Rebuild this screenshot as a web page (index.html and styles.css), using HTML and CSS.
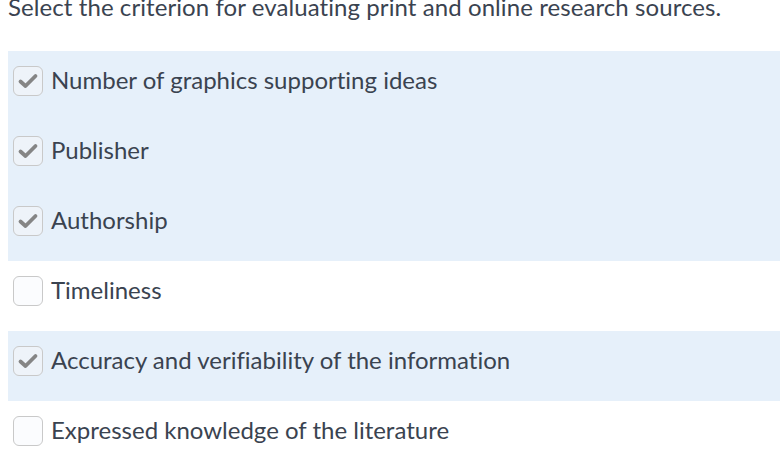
FILE: index.html
```html
<!DOCTYPE html>
<html>
<head>
<meta charset="utf-8">
<link rel="stylesheet" href="styles.css">
</head>
<body>
<div class="page">
  <p class="question">Select the criterion for evaluating print and online research sources.</p>
  <ul class="options">
    <li class="option selected"><span class="box"><svg viewBox="0 0 30 30" width="30" height="30"><path d="M7.5 15.5 L12.5 20 L22.5 10" fill="none" stroke="#858585" stroke-width="3.8" stroke-linecap="round" stroke-linejoin="round"/></svg></span><span class="label">Number of graphics supporting ideas</span></li>
    <li class="option selected"><span class="box"><svg viewBox="0 0 30 30" width="30" height="30"><path d="M7.5 15.5 L12.5 20 L22.5 10" fill="none" stroke="#858585" stroke-width="3.8" stroke-linecap="round" stroke-linejoin="round"/></svg></span><span class="label">Publisher</span></li>
    <li class="option selected"><span class="box"><svg viewBox="0 0 30 30" width="30" height="30"><path d="M7.5 15.5 L12.5 20 L22.5 10" fill="none" stroke="#858585" stroke-width="3.8" stroke-linecap="round" stroke-linejoin="round"/></svg></span><span class="label">Authorship</span></li>
    <li class="option"><span class="box"></span><span class="label">Timeliness</span></li>
    <li class="option selected"><span class="box"><svg viewBox="0 0 30 30" width="30" height="30"><path d="M7.5 15.5 L12.5 20 L22.5 10" fill="none" stroke="#858585" stroke-width="3.8" stroke-linecap="round" stroke-linejoin="round"/></svg></span><span class="label">Accuracy and verifiability of the information</span></li>
    <li class="option"><span class="box"></span><span class="label">Expressed knowledge of the literature</span></li>
  </ul>
</div>
</body>
</html>
```
FILE: styles.css
```css
html, body {
  margin: 0;
  padding: 0;
  background: #ffffff;
  overflow: hidden;
}
.page {
  padding-left: 8px;
  font-family: Lato, "Noto Sans", sans-serif;
  font-variant-ligatures: none;
  color: #3a4350;
}
.question {
  margin: 0;
  margin-top: -6px;
  font-size: 24px;
  line-height: 26px;
  height: 57px;
  white-space: nowrap;
  letter-spacing: 0.08px;
}
.options {
  list-style: none;
  margin: 0;
  padding: 0;
}
.option {
  height: 70px;
  box-sizing: border-box;
  padding: 15px 0 0 5px;
  display: flex;
  align-items: flex-start;
  gap: 8px;
  width: 790px;
}
.option.selected {
  background: #e6f0fa;
}
.box {
  width: 30px;
  height: 30px;
  box-sizing: border-box;
  border: 1px solid #c9c9c9;
  border-radius: 6px;
  background: #fbfcfe;
  display: flex;
  align-items: center;
  justify-content: center;
  flex: none;
}
.selected .box {
  background: #eef3f9;
}
.box svg {
  display: block;
  margin: -1px;
}
.label {
  font-size: 24px;
  line-height: 28px;
}
```
